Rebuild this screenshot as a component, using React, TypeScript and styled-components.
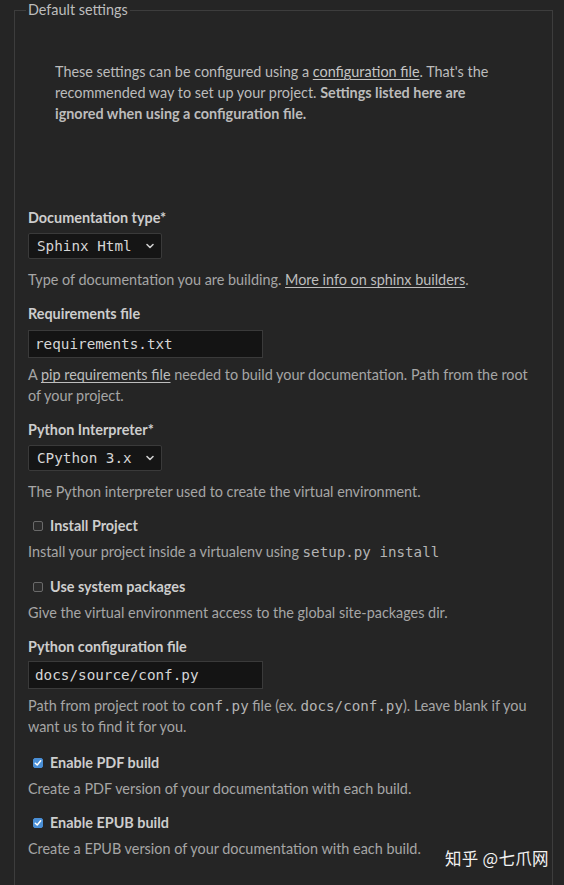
import styled, { createGlobalStyle } from "styled-components";

const GlobalStyle = createGlobalStyle`
  html, body {
    margin: 0;
    padding: 0;
    background: #252525;
  }
  body {
    font-family: Lato, "Noto Sans", sans-serif;
    color: #c4c4c4;
    overflow: hidden;
  }
`;

//layout
const Page = styled.div`
  position: relative;
  width: 564px;
  height: 885px;
  overflow: hidden;
  background-color: #252525;
`;
const Fieldset = styled.fieldset`
  margin: 0 11px 0 14px;
  padding: 14px 13px 40px;
  border: 1px solid #3d3d3d;
  min-width: 0;
`;
const Legend = styled.legend`
  padding: 0 2px;
  margin-left: -2px;
  font-size: 14.4px;
  line-height: 20px;
  color: #bdbdbd;
`;
const Note = styled.div`
  padding: 27px;
  margin-bottom: 57px;
  font-size: 14.4px;
  line-height: 21px;
  color: #bcbcbc;
  b {
    font-weight: 700;
  }
  a {
    color: #c4c4c4;
    text-decoration: underline;
    text-underline-offset: 2px;
  }
`;
const Field = styled.div<{ $space?: number }>`
  margin-bottom: ${p => p.$space ?? 14}px;
`;
const Label = styled.label<{ $gap?: number }>`
  display: flex;
  align-items: center;
  gap: 7px;
  font-size: 14.4px;
  font-weight: 700;
  line-height: 20px;
  color: #cdcdcd;
  margin-bottom: ${p => p.$gap ?? 5}px;
`;
const Help = styled.p<{ $gap?: number }>`
  margin: ${p => p.$gap ?? 0}px 0 0;
  font-size: 14.4px;
  line-height: 21px;
  color: #a6a6a6;
  a {
    color: #bdbdbd;
    text-decoration: underline;
    text-underline-offset: 2px;
  }
`;
const Code = styled.code`
  font-family: "DejaVu Sans Mono", monospace;
  font-size: 14.2px;
  line-height: 0;
  color: #b4b4b4;
`;
const SelectBox = styled.div`
  box-sizing: border-box;
  width: 134px;
  height: 26px;
  display: flex;
  align-items: center;
  justify-content: space-between;
  padding: 0 6px 0 8px;
  background: #151515;
  border: 1px solid #3a3a3a;
  border-radius: 2px;
  font-family: "DejaVu Sans Mono", monospace;
  font-size: 14.3px;
  color: #d6d6d6;
`;
const TextInput = styled.div`
  box-sizing: border-box;
  width: 235px;
  height: 28px;
  display: flex;
  align-items: center;
  padding: 0 6px;
  background: #141414;
  border: 1px solid #3a3a3a;
  font-family: "DejaVu Sans Mono", monospace;
  font-size: 14.3px;
  color: #d6d6d6;
`;
const Check = styled.span<{ $on?: boolean }>`
  box-sizing: border-box;
  width: 10px;
  height: 10px;
  margin-left: 5px;
  flex: none;
  display: flex;
  align-items: center;
  justify-content: center;
  border-radius: 2px;
  border: 1px solid ${p => (p.$on ? "#4a8fd6" : "#6a6a6a")};
  background: ${p => (p.$on ? "#4a8fd6" : "#2c2c2c")};
`;
const Watermark = styled.div`
  position: absolute;
  left: 445px;
  top: 846px;
  font-family: "Noto Sans CJK SC", sans-serif;
  font-size: 16.5px;
  line-height: 24px;
  color: #f2f2f2;
  letter-spacing: 0.3px;
`;

function Chevron() {
  return (
    <svg width="10" height="10" viewBox="0 0 10 10">
      <path d="M2 3.5 L5 6.5 L8 3.5" fill="none" stroke="#cfcfcf" strokeWidth="1.6" strokeLinecap="round" strokeLinejoin="round" />
    </svg>
  );
}

function Tick() {
  return (
    <svg width="8" height="8" viewBox="0 0 8 8">
      <path d="M1.3 4.2 L3.2 6 L6.7 1.8" fill="none" stroke="#fff" strokeWidth="1.5" strokeLinecap="round" strokeLinejoin="round" />
    </svg>
  );
}

function CheckField({ label, on, children }: { label: string; on?: boolean; children: React.ReactNode }) {
  return (
    <Field $space={14.5}>
      <Label $gap={5}>
        <Check $on={on}>{on ? <Tick /> : null}</Check>
        {label}
      </Label>
      <Help>{children}</Help>
    </Field>
  );
}

export default function App() {
  return (
    <Page>
      <GlobalStyle />
      <Fieldset>
        <Legend>Default settings</Legend>
        <Note>
          These settings can be configured using a <a>configuration file</a>. That's the
          recommended way to set up your project. <b>Settings listed here are ignored when using a configuration file.</b>
        </Note>

        <Field>
          <Label>Documentation type*</Label>
          <SelectBox>
            <span>Sphinx Html</span>
            <Chevron />
          </SelectBox>
          <Help $gap={10}>
            Type of documentation you are building. <a>More info on sphinx builders</a>.
          </Help>
        </Field>

        <Field>
          <Label $gap={6}>Requirements file</Label>
          <TextInput>requirements.txt</TextInput>
          <Help $gap={6}>
            A <a>pip requirements file</a> needed to build your documentation. Path from the root of your project.
          </Help>
        </Field>

        <Field>
          <Label>Python Interpreter*</Label>
          <SelectBox>
            <span>CPython 3.x</span>
            <Chevron />
          </SelectBox>
          <Help $gap={10}>The Python interpreter used to create the virtual environment.</Help>
        </Field>

        <CheckField label="Install Project">
          Install your project inside a virtualenv using <Code>setup.py install</Code>
        </CheckField>

        <CheckField label="Use system packages">
          Give the virtual environment access to the global site-packages dir.
        </CheckField>

        <Field $space={15.5}>
          <Label $gap={4}>Python configuration file</Label>
          <TextInput>docs/source/conf.py</TextInput>
          <Help $gap={6}>
            Path from project root to <Code>conf.py</Code> file (ex. <Code>docs/conf.py</Code>). Leave blank if you
            want us to find it for you.
          </Help>
        </Field>

        <CheckField label="Enable PDF build" on>
          Create a PDF version of your documentation with each build.
        </CheckField>

        <CheckField label="Enable EPUB build" on>
          Create a EPUB version of your documentation with each build.
        </CheckField>
      </Fieldset>
      <Watermark>知乎 @七爪网</Watermark>
    </Page>
  );
}
